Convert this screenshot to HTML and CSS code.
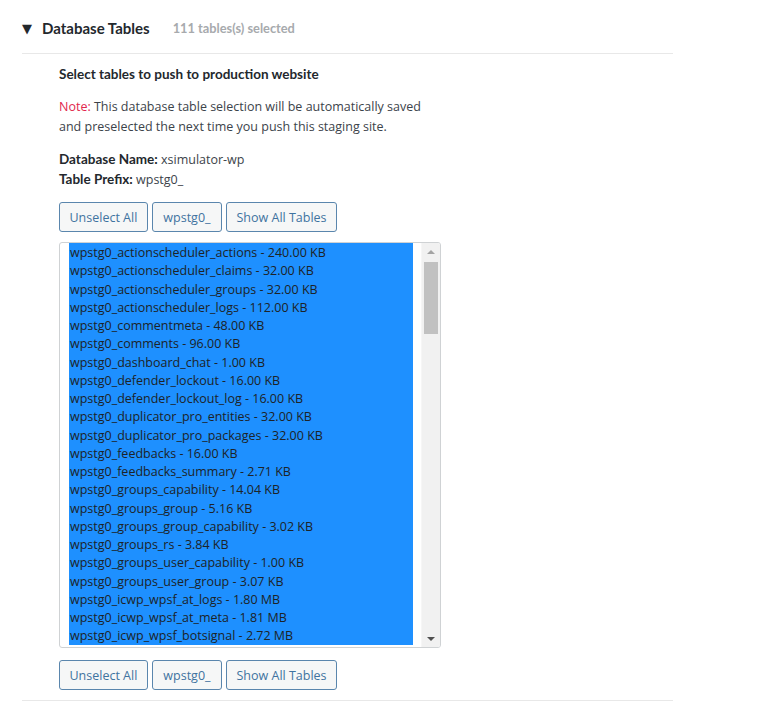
FILE: index.html
```html
<!DOCTYPE html>
<html>
<head>
<meta charset="utf-8">
<link rel="stylesheet" href="styles.css">
</head>
<body>
<div class="section">
  <div class="header">
    <span class="caret">▼</span>
    <span class="title">Database Tables</span>
    <span class="count">111 tables(s) selected</span>
  </div>
  <div class="content">
    <p class="lead">Select tables to push to production website</p>
    <p class="note"><span class="note-label">Note:</span> This database table selection will be automatically saved<br>and preselected the next time you push this staging site.</p>
    <p class="meta"><b>Database Name:</b> xsimulator-wp<br><b>Table Prefix:</b> wpstg0_</p>
    <div class="buttons">
      <button class="btn">Unselect All</button>
      <button class="btn">wpstg0_</button>
      <button class="btn">Show All Tables</button>
    </div>
    <div class="listbox">
      <div class="options">
        <div class="opt">wpstg0_actionscheduler_actions - 240.00 KB</div>
        <div class="opt">wpstg0_actionscheduler_claims - 32.00 KB</div>
        <div class="opt">wpstg0_actionscheduler_groups - 32.00 KB</div>
        <div class="opt">wpstg0_actionscheduler_logs - 112.00 KB</div>
        <div class="opt">wpstg0_commentmeta - 48.00 KB</div>
        <div class="opt">wpstg0_comments - 96.00 KB</div>
        <div class="opt">wpstg0_dashboard_chat - 1.00 KB</div>
        <div class="opt">wpstg0_defender_lockout - 16.00 KB</div>
        <div class="opt">wpstg0_defender_lockout_log - 16.00 KB</div>
        <div class="opt">wpstg0_duplicator_pro_entities - 32.00 KB</div>
        <div class="opt">wpstg0_duplicator_pro_packages - 32.00 KB</div>
        <div class="opt">wpstg0_feedbacks - 16.00 KB</div>
        <div class="opt">wpstg0_feedbacks_summary - 2.71 KB</div>
        <div class="opt">wpstg0_groups_capability - 14.04 KB</div>
        <div class="opt">wpstg0_groups_group - 5.16 KB</div>
        <div class="opt">wpstg0_groups_group_capability - 3.02 KB</div>
        <div class="opt">wpstg0_groups_rs - 3.84 KB</div>
        <div class="opt">wpstg0_groups_user_capability - 1.00 KB</div>
        <div class="opt">wpstg0_groups_user_group - 3.07 KB</div>
        <div class="opt">wpstg0_icwp_wpsf_at_logs - 1.80 MB</div>
        <div class="opt">wpstg0_icwp_wpsf_at_meta - 1.81 MB</div>
        <div class="opt">wpstg0_icwp_wpsf_botsignal - 2.72 MB</div>
      </div>
      <div class="scrollbar">
        <div class="arrow up"></div>
        <div class="track"><div class="thumb"></div></div>
        <div class="arrow down"></div>
      </div>
    </div>
    <div class="buttons bottom">
      <button class="btn">Unselect All</button>
      <button class="btn">wpstg0_</button>
      <button class="btn">Show All Tables</button>
    </div>
  </div>
</div>
</body>
</html>
```

FILE: styles.css
```css
html, body {
  margin: 0;
  padding: 0;
  background: #ffffff;
}
body {
  font-family: "Open Sans", "Noto Sans", sans-serif;
  font-size: 12.5px;
  color: #3c434a;
}
b, .lead, .title, .count {
  font-family: Lato, "Noto Sans", sans-serif;
}
.section {
  margin-left: 22px;
  width: 651px;
  border-bottom: 1px solid #e8e8e8;
}
.header {
  display: flex;
  align-items: center;
  height: 20px;
  padding-top: 18px;
  padding-bottom: 15px;
  border-bottom: 1px solid #e8e8e8;
}
.caret {
  font-size: 13px;
  color: #23282d;
  width: 20px;
  font-family: "DejaVu Sans", sans-serif;
}
.title {
  font-size: 15px;
  font-weight: 700;
  color: #23282d;
}
.count {
  margin-left: 23px;
  font-size: 12.8px;
  font-weight: 700;
  color: #a7aaad;
}
.content {
  padding-left: 37px;
  padding-top: 10px;
  padding-bottom: 10px;
}
p {
  margin: 0;
  line-height: 20px;
}
.lead {
  height: 20px;
  font-size: 13.5px;
  font-weight: 700;
  color: #23282d;
}
.note {
  margin-top: 13px;
  height: 40px;
}
.note-label {
  color: #e2264d;
}
.meta {
  margin-top: 12px;
  height: 40px;
  padding-top: 1px;
  box-sizing: border-box;
}
.meta b {
  font-size: 13.5px;
  line-height: 1;
  color: #23282d;
}
.buttons {
  margin-top: 13px;
  display: flex;
  gap: 4px;
}
.buttons.bottom {
  margin-top: 12px;
}
.btn {
  height: 30px;
  padding: 0 9.5px;
  border: 1px solid #5a86ad;
  border-radius: 3px;
  background: #f6f7f7;
  color: #3f73a0;
  font-family: inherit;
  font-size: 12.5px;
  cursor: pointer;
}
.btn:nth-child(2) {
  padding: 0 10.5px;
}
.listbox {
  margin-top: 10px;
  width: 380px;
  height: 404px;
  border: 1px solid #cfd2d4;
  border-radius: 3px;
  display: flex;
  overflow: hidden;
}
.options {
  flex: 1;
  padding-left: 9px;
  padding-right: 8px;
  overflow: hidden;
}
.opt {
  height: 18.25px;
  line-height: 16.25px;
  padding-top: 2px;
  box-sizing: border-box;
  background: #1e90ff;
  color: #1d2327;
  white-space: nowrap;
  padding-left: 1px;
}
.scrollbar {
  width: 18px;
  background: #f1f1f1;
  display: flex;
  flex-direction: column;
  border-left: 1px solid #f6f6f6;
}
.arrow {
  height: 17px;
  display: flex;
  align-items: center;
  justify-content: center;
}
.arrow.up::before {
  content: "";
  border-left: 4px solid transparent;
  border-right: 4px solid transparent;
  border-bottom: 4px solid #a3a3a3;
}
.arrow.down::before {
  content: "";
  border-left: 4px solid transparent;
  border-right: 4px solid transparent;
  border-top: 4px solid #505050;
}
.track {
  flex: 1;
  padding: 2px 2px;
}
.thumb {
  height: 72px;
  background: #c1c1c1;
}
```
